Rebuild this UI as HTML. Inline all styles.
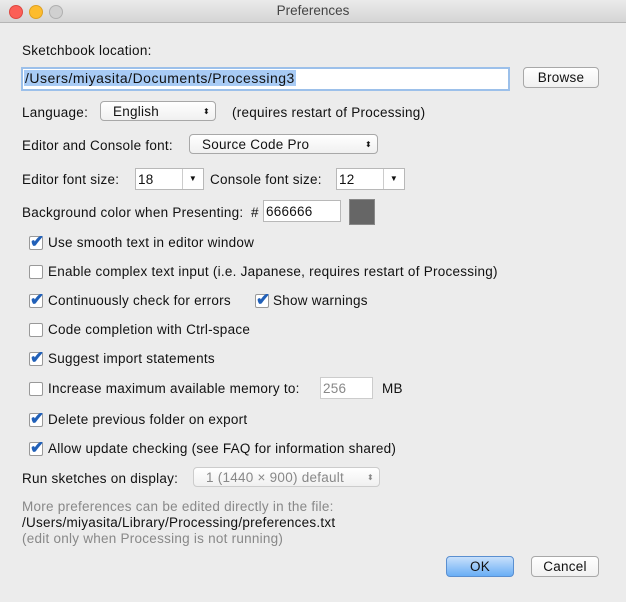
<html><head><style>
body{margin:0;width:626px;height:602px;background:#ececec;font-family:"Liberation Sans",sans-serif;font-size:13.5px;color:#111;position:relative;overflow:hidden;letter-spacing:0.25px}
.a{position:absolute;white-space:nowrap}
.tb{left:0;top:0;width:626px;height:22px;background:linear-gradient(#ebebeb,#d5d5d5);border-bottom:1px solid #b5b5b5;text-align:center;line-height:22px;color:#444;font-size:13.5px;letter-spacing:0}
.d{position:absolute;top:5px;width:12px;height:12px;border-radius:50%}
.btn{background:linear-gradient(#fff,#f0f0f0);border:1px solid #a8a8a8;border-radius:4px;text-align:center}
.in{background:#fff;border:1px solid #b8b8b8}
.cb{position:absolute;width:12px;height:12px;border:1px solid #999;border-radius:2px;background:#fff}
.ck{position:absolute;font-size:17px;color:#2160b8;font-weight:bold;line-height:14px}
.g{color:#888}
</style></head><body>
<div class="a tb">Preferences</div>
<div class="d" style="left:9px;background:#fc5f57;border:0.5px solid #de4841"></div>
<div class="d" style="left:29px;background:#fdbc2e;border:0.5px solid #dea123"></div>
<div class="d" style="left:49px;background:#d0d0d0;border:0.5px solid #b0b0b0"></div>

<div class="a" style="left:22px;top:43px">Sketchbook location:</div>
<div class="a in" style="left:21px;top:67px;width:485px;height:20px;border:2px solid #9cc0ea"></div>
<div class="a" style="left:24px;top:70px;background:#a8cbf5;padding:0 1px;font-size:14px;letter-spacing:0.5px">/Users/miyasita/Documents/Processing3</div>
<div class="a btn" style="left:523px;top:67px;width:74px;height:19px;line-height:19px">Browse</div>

<div class="a" style="left:22px;top:105px">Language:</div>
<div class="a btn" style="left:100px;top:101px;height:20px;line-height:20px;text-align:left;padding-left:12px;box-sizing:border-box;width:116px">English<span style="position:absolute;right:5px;font-size:8px;top:0">⬍</span></div>
<div class="a" style="left:232px;top:105px">(requires restart of Processing)</div>

<div class="a" style="left:22px;top:138px">Editor and Console font:</div>
<div class="a btn" style="left:189px;top:134px;width:189px;height:20px;line-height:20px;text-align:left;padding-left:12px;box-sizing:border-box">Source Code Pro<span style="position:absolute;right:5px;font-size:8px">⬍</span></div>

<div class="a" style="left:22px;top:172px">Editor font size:</div>
<div class="a in" style="left:135px;top:168px;width:65px;height:20px;line-height:22px;padding-left:2px">18<span style="position:absolute;right:0;top:0;width:20px;border-left:1px solid #ccc;height:20px;text-align:center;font-size:8px;line-height:20px">▼</span></div>
<div class="a" style="left:210px;top:172px">Console font size:</div>
<div class="a in" style="left:336px;top:168px;width:65px;height:20px;line-height:22px;padding-left:2px">12<span style="position:absolute;right:0;top:0;width:20px;border-left:1px solid #ccc;height:20px;text-align:center;font-size:8px;line-height:20px">▼</span></div>

<div class="a" style="left:22px;top:205px">Background color when Presenting:</div>
<div class="a" style="left:251px;top:205px">#</div>
<div class="a in" style="left:263px;top:200px;width:74px;height:20px;line-height:22px;padding-left:2px">666666</div>
<div class="a" style="left:349px;top:199px;width:24px;height:24px;background:#666;border:1px solid #888"></div>

<div class="cb" style="left:29px;top:236px"></div><div class="ck" style="left:30px;top:235px">✔</div>
<div class="a" style="left:48px;top:235px">Use smooth text in editor window</div>
<div class="cb" style="left:29px;top:265px"></div>
<div class="a" style="left:48px;top:264px">Enable complex text input (i.e. Japanese, requires restart of Processing)</div>
<div class="cb" style="left:29px;top:294px"></div><div class="ck" style="left:30px;top:293px">✔</div>
<div class="a" style="left:48px;top:293px">Continuously check for errors</div>
<div class="cb" style="left:255px;top:294px"></div><div class="ck" style="left:256px;top:293px">✔</div>
<div class="a" style="left:273px;top:293px">Show warnings</div>
<div class="cb" style="left:29px;top:323px"></div>
<div class="a" style="left:48px;top:322px">Code completion with Ctrl-space</div>
<div class="cb" style="left:29px;top:352px"></div><div class="ck" style="left:30px;top:351px">✔</div>
<div class="a" style="left:48px;top:351px">Suggest import statements</div>
<div class="cb" style="left:29px;top:382px"></div>
<div class="a" style="left:48px;top:381px">Increase maximum available memory to:</div>
<div class="a in g" style="left:320px;top:377px;width:49px;height:20px;line-height:22px;padding-left:2px;border-color:#ccc">256</div>
<div class="a" style="left:382px;top:381px">MB</div>
<div class="cb" style="left:29px;top:413px"></div><div class="ck" style="left:30px;top:412px">✔</div>
<div class="a" style="left:48px;top:412px">Delete previous folder on export</div>
<div class="cb" style="left:29px;top:442px"></div><div class="ck" style="left:30px;top:441px">✔</div>
<div class="a" style="left:48px;top:441px">Allow update checking (see FAQ for information shared)</div>

<div class="a" style="left:22px;top:471px">Run sketches on display:</div>
<div class="a btn g" style="left:193px;top:467px;width:187px;height:20px;line-height:20px;text-align:left;padding-left:12px;box-sizing:border-box;border-color:#ccc">1 (1440 × 900) default<span style="position:absolute;right:5px;font-size:8px">⬍</span></div>

<div class="a g" style="left:22px;top:499px">More preferences can be edited directly in the file:</div>
<div class="a" style="left:22px;top:515px">/Users/miyasita/Library/Processing/preferences.txt</div>
<div class="a g" style="left:22px;top:531px">(edit only when Processing is not running)</div>

<div class="a btn" style="left:446px;top:556px;width:66px;height:19px;line-height:19px;background:linear-gradient(#c9e0fb,#6aaef5);border-color:#5a8fd0">OK</div>
<div class="a btn" style="left:531px;top:556px;width:66px;height:19px;line-height:19px">Cancel</div>
</body></html>
